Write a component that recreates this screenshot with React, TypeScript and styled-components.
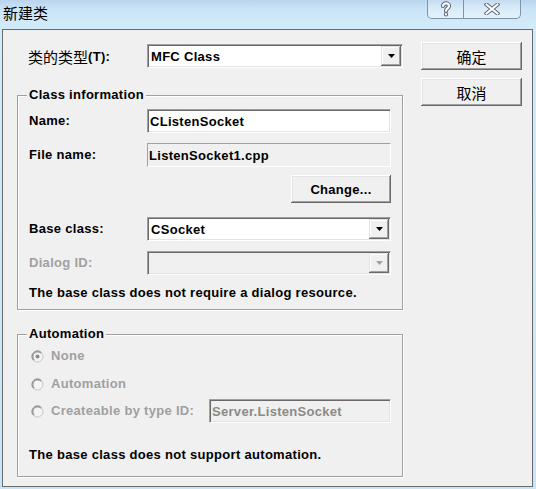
import React from 'react';
import styled, { createGlobalStyle } from 'styled-components';

const UI = `"Liberation Sans", Arial, sans-serif`;
const CJK = `"Noto Sans CJK SC", "Liberation Sans", sans-serif`;

const Global = createGlobalStyle`
  html, body { margin: 0; padding: 0; }
  body { width: 536px; height: 489px; overflow: hidden; background: #c9e3f6; }
`;

const Window = styled.div`
  width: 536px;
  height: 489px;
  display: flex;
  flex-direction: column;
  background: linear-gradient(180deg, #b9d4ee 0px, #c9e2f6 8px, #d2ebfa 24px, #c8e4f6 100%);
  font-family: ${UI};
`;

const TitleBar = styled.div`
  height: 29px;
  display: flex;
  align-items: flex-start;
  padding-left: 3px;
  box-sizing: border-box;
`;

const Title = styled.span`
  font-family: ${CJK};
  font-size: 15px;
  line-height: 26px;
  color: #000;
`;

const TitleButtons = styled.div`
  margin-left: auto;
  margin-right: 15px;
  height: 18px;
  display: flex;
  border: 1px solid #8193a8;
  border-top: none;
  border-radius: 0 0 5px 5px;
  overflow: hidden;
  background: linear-gradient(180deg, rgba(255,255,255,0.15), rgba(255,255,255,0.45));
`;

const CaptionButton = styled.div<{ $w: number; $divider?: boolean }>`
  width: ${(p) => p.$w}px;
  height: 18px;
  display: flex;
  align-items: center;
  justify-content: center;
  border-right: ${(p) => (p.$divider ? '1px solid #8193a8' : 'none')};
`;

const Client = styled.div`
  margin: 0 3px 2px 2px;
  height: 458px;
  box-sizing: border-box;
  border: 1px solid #6b6b6b;
  background: #f0f0f0;
  display: flex;
  gap: 18px;
  padding: 0 10px 0 14px;
`;

const LeftCol = styled.div`
  width: 386px;
  display: flex;
  flex-direction: column;
  padding-top: 14px;
`;

const RightCol = styled.div`
  width: 101px;
  display: flex;
  flex-direction: column;
  gap: 8px;
  padding-top: 12px;
`;

const TypeRow = styled.div`
  display: grid;
  grid-template-columns: 130px 256px;
  align-items: center;
  height: 24px;
`;

const TypeLabel = styled.span`
  padding-left: 11px;
  display: flex;
  align-items: center;
  color: #000;
`;

const CjkText = styled.span`
  font-family: ${CJK};
  font-size: 15px;
  font-weight: 400;
`;

const BoldText = styled.span`
  font-family: ${UI};
  font-size: 13px;
  font-weight: 700;
  letter-spacing: 0.3px;
`;

const Group = styled.div<{ $mt: number; $pb: number }>`
  position: relative;
  margin-top: ${(p) => p.$mt}px;
  border: 1px solid #a0a0a0;
  box-shadow: inset 1px 1px 0 #fff, 1px 1px 0 #fff;
  padding: 13px 11px ${(p) => p.$pb}px 11px;
  display: flex;
  flex-direction: column;
`;

const GroupCaption = styled.span`
  position: absolute;
  top: -9px;
  left: 9px;
  padding: 0 2px;
  background: #f0f0f0;
  font-size: 13px;
  font-weight: 700;
  letter-spacing: 0.3px;
  line-height: 16px;
  color: #000;
`;

const FieldRow = styled.div<{ $mt?: number }>`
  display: grid;
  grid-template-columns: 118px 244px;
  align-items: center;
  margin-top: ${(p) => p.$mt ?? 0}px;
`;

const Label = styled.span<{ $disabled?: boolean }>`
  font-size: 13px;
  font-weight: 700;
  letter-spacing: 0.3px;
  line-height: 16px;
  color: ${(p) => (p.$disabled ? '#a0a0a0' : '#000')};
`;

const Edit = styled.div<{ $variant?: 'normal' | 'readonly' | 'disabled'; $w?: number }>`
  box-sizing: border-box;
  height: 24px;
  width: ${(p) => (p.$w ? `${p.$w}px` : 'auto')};
  display: flex;
  align-items: center;
  padding-left: 1px;
  border: 1px solid;
  border-color: #a0a0a0 #fff #fff #a0a0a0;
  box-shadow: ${(p) =>
    p.$variant === 'readonly' ? 'inset -1px -1px #f0f0f0' : 'inset 1px 1px #696969, inset -1px -1px #e3e3e3'};
  background: ${(p) => (p.$variant === 'normal' || !p.$variant ? '#fff' : '#f0f0f0')};
  font-size: 13px;
  font-weight: 700;
  letter-spacing: 0.3px;
  color: ${(p) => (p.$variant === 'disabled' ? '#8a8a8a' : '#000')};
  padding-left: ${(p) => (p.$variant === 'readonly' ? '1px' : '2px')};
  white-space: nowrap;
  overflow: hidden;
`;

const Combo = styled.div<{ $disabled?: boolean }>`
  box-sizing: border-box;
  height: 24px;
  display: flex;
  align-items: stretch;
  border: 1px solid;
  border-color: #a0a0a0 #fff #fff #a0a0a0;
  box-shadow: inset 1px 1px #696969, inset -1px -1px #e3e3e3;
  padding: 1px;
  background: ${(p) => (p.$disabled ? '#f0f0f0' : '#fff')};
`;

const ComboText = styled.span`
  flex: 1;
  display: flex;
  align-items: center;
  padding-left: 2px;
  font-size: 13px;
  font-weight: 700;
  letter-spacing: 0.3px;
  color: #000;
`;

const DropButton = styled.span`
  width: 20px;
  display: flex;
  align-items: center;
  justify-content: center;
  background: #f0f0f0;
  box-shadow: inset -1px -1px #696969, inset 1px 1px #e3e3e3, inset -2px -2px #a0a0a0, inset 2px 2px #fff;
`;

const Button = styled.button<{ $w?: number }>`
  width: ${(p) => p.$w ?? 101}px;
  height: 28px;
  padding: 0;
  border: none;
  background: #f0f0f0;
  box-shadow: inset -1px -1px #696969, inset 1px 1px #fff, inset -2px -2px #a0a0a0, inset 2px 2px #e3e3e3;
  color: #000;
  display: flex;
  align-items: center;
  justify-content: center;
  font-family: ${UI};
  cursor: default;
`;

const ButtonRow = styled.div<{ $mt: number }>`
  display: flex;
  justify-content: flex-end;
  margin-top: ${(p) => p.$mt}px;
`;

const Note = styled.div<{ $mt: number }>`
  margin-top: ${(p) => p.$mt}px;
  font-size: 13px;
  font-weight: 700;
  letter-spacing: 0.3px;
  line-height: 16px;
  color: #000;
  white-space: nowrap;
`;

const RadioRow = styled.div<{ $mt?: number; $h?: number }>`
  display: flex;
  align-items: center;
  gap: 7px;
  padding-left: 2px;
  height: ${(p) => p.$h ?? 16}px;
  margin-top: ${(p) => p.$mt ?? 0}px;
`;

const RadioText = styled.span`
  font-size: 13px;
  font-weight: 700;
  letter-spacing: 0.3px;
  color: #a0a0a0;
  line-height: 16px;
`;

const Spacer = styled.span`
  flex: 1;
`;

const Arrow = ({ color }: { color: string }) => (
  <svg width="7" height="4" viewBox="0 0 7 4">
    <path d="M0 0H7L3.5 4Z" fill={color} />
  </svg>
);

const Radio = ({ checked }: { checked?: boolean }) => (
  <svg width="13" height="13" viewBox="0 0 13 13">
    <circle cx="6.5" cy="6.5" r="5.5" fill="#f4f4f4" stroke="#c4c4c4" strokeWidth="1" />
    <path d="M2.6 10.4 A5.5 5.5 0 0 1 10.4 2.6" fill="none" stroke="#8a8a8a" strokeWidth="1" />
    <path d="M3.3 9.7 A4.5 4.5 0 0 1 9.7 3.3" fill="none" stroke="#5e5e5e" strokeWidth="1" opacity="0.6" />
    {checked && <circle cx="6.5" cy="6.5" r="2" fill="#8a8a8a" />}
  </svg>
);

const HelpIcon = () => (
  <svg width="12" height="16" viewBox="0 0 12 16">
    <g fill="none" strokeLinecap="round" strokeLinejoin="round">
      <path d="M3 5 C3 1.6 9 1.6 9 5 C9 7.4 6 7.2 6 9.8" stroke="#5b6777" strokeWidth="4.2" />
      <path d="M3 5 C3 1.6 9 1.6 9 5 C9 7.4 6 7.2 6 9.8" stroke="#fff" strokeWidth="2.2" />
      <path d="M6 13.2 L6 13.4" stroke="#5b6777" strokeWidth="4.2" />
      <path d="M6 13.2 L6 13.4" stroke="#fff" strokeWidth="2.2" />
    </g>
  </svg>
);

const CloseIcon = () => (
  <svg width="16" height="12" viewBox="0 0 16 12">
    <g fill="none" strokeLinecap="square">
      <path d="M2.5 1.5 L13.5 10.5 M13.5 1.5 L2.5 10.5" stroke="#5b6777" strokeWidth="4" />
      <path d="M2.5 1.5 L13.5 10.5 M13.5 1.5 L2.5 10.5" stroke="#fff" strokeWidth="2" />
    </g>
  </svg>
);

export default function App() {
  return (
    <>
      <Global />
      <Window>
        <TitleBar>
          <Title>新建类</Title>
          <TitleButtons>
            <CaptionButton $w={35} $divider>
              <HelpIcon />
            </CaptionButton>
            <CaptionButton $w={56}>
              <CloseIcon />
            </CaptionButton>
          </TitleButtons>
        </TitleBar>
        <Client>
          <LeftCol>
            <TypeRow>
              <TypeLabel>
                <CjkText>类的类型</CjkText>
                <BoldText>(T):</BoldText>
              </TypeLabel>
              <Combo>
                <ComboText>MFC Class</ComboText>
                <DropButton>
                  <Arrow color="#000" />
                </DropButton>
              </Combo>
            </TypeRow>

            <Group $mt={27} $pb={8}>
              <GroupCaption>Class information</GroupCaption>
              <FieldRow>
                <Label>Name:</Label>
                <Edit $variant="normal">CListenSocket</Edit>
              </FieldRow>
              <FieldRow $mt={10}>
                <Label>File name:</Label>
                <Edit $variant="readonly">ListenSocket1.cpp</Edit>
              </FieldRow>
              <ButtonRow $mt={8}>
                <Button $w={100}>
                  <BoldText>Change...</BoldText>
                </Button>
              </ButtonRow>
              <FieldRow $mt={14}>
                <Label>Base class:</Label>
                <Combo>
                  <ComboText>CSocket</ComboText>
                  <DropButton>
                    <Arrow color="#000" />
                  </DropButton>
                </Combo>
              </FieldRow>
              <FieldRow $mt={10}>
                <Label $disabled>Dialog ID:</Label>
                <Combo $disabled>
                  <ComboText />
                  <DropButton>
                    <Arrow color="#a0a0a0" />
                  </DropButton>
                </Combo>
              </FieldRow>
              <Note $mt={10}>The base class does not require a dialog resource.</Note>
            </Group>

            <Group $mt={24} $pb={13}>
              <GroupCaption>Automation</GroupCaption>
              <RadioRow>
                <Radio checked />
                <RadioText>None</RadioText>
              </RadioRow>
              <RadioRow $mt={12}>
                <Radio />
                <RadioText>Automation</RadioText>
              </RadioRow>
              <RadioRow $mt={7} $h={24}>
                <Radio />
                <RadioText>Createable by type ID:</RadioText>
                <Spacer />
                <Edit $variant="disabled" $w={182}>Server.ListenSocket</Edit>
              </RadioRow>
              <Note $mt={24}>The base class does not support automation.</Note>
            </Group>
          </LeftCol>

          <RightCol>
            <Button>
              <CjkText>确定</CjkText>
            </Button>
            <Button>
              <CjkText>取消</CjkText>
            </Button>
          </RightCol>
        </Client>
      </Window>
    </>
  );
}
